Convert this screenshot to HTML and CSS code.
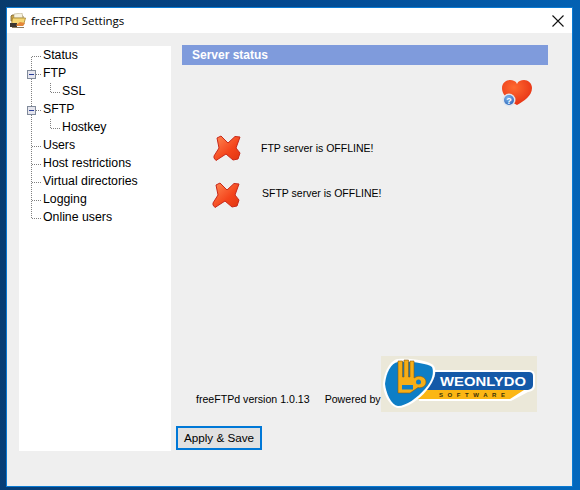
FILE: index.html
```html
<!DOCTYPE html>
<html lang="en">
<head>
<meta charset="utf-8">
<title>freeFTPd Settings</title>
<link rel="stylesheet" href="styles.css">
</head>
<body>
<div class="window">
  <header class="titlebar">
    <svg class="app-icon" width="16" height="15" viewBox="0 0 16 15">
      <path d="M1 3l1-1h4l1 1h6v5H1z" fill="#c9a24a" stroke="#7a6330" stroke-width=".8"/>
      <path d="M4 1l8-1 1 5H4z" fill="#f6f2e0" stroke="#a89a70" stroke-width=".5"/>
      <path d="M1.500 12l1-7h13l-2 7z" fill="#f5d774" stroke="#a5832f" stroke-width=".8"/>
      <rect x="0" y="10" width="7" height="4" fill="#3c3630"/>
      <path d="M6 12l4-3 5 1-2 3H7z" fill="#e4863a"/>
      <path d="M2 14h12v1H2z" fill="#8a7a60"/>
    </svg>
    <span class="title">freeFTPd Settings</span>
    <svg class="close" width="12" height="12" viewBox="0 0 12 12"><path d="M.5.5l11 11M11.500.5l-11 11" stroke="#111" stroke-width="1.100" fill="none"/></svg>
  </header>
  <div class="client">
    <nav class="tree">
      <svg class="tree-lines" width="60" height="200" viewBox="0 0 60 200">
        <g stroke="#808080" stroke-width="1" stroke-dasharray="1 1" fill="none" shape-rendering="crispEdges">
          <path d="M12.500 10.500V172.500"/>
          <path d="M12.500 10.500H23M17 28.500H23M17 64.500H23M12.500 100.500H23M12.500 118.500H23M12.500 136.500H23M12.500 154.500H23M12.500 172.500H23"/>
          <path d="M31.500 37V46.500H41M31.500 73V82.500H41"/>
        </g>
        <g shape-rendering="crispEdges">
          <rect x="8.500" y="24.500" width="8" height="8" fill="#e6e6ee" stroke="#808a9a"/>
          <path d="M10 28.500h5" stroke="#2a3f9a"/>
          <rect x="8.500" y="60.500" width="8" height="8" fill="#e6e6ee" stroke="#808a9a"/>
          <path d="M10 64.500h5" stroke="#2a3f9a"/>
        </g>
      </svg>
      <div class="node">Status</div>
      <div class="node">FTP</div>
      <div class="node child">SSL</div>
      <div class="node">SFTP</div>
      <div class="node child">Hostkey</div>
      <div class="node">Users</div>
      <div class="node">Host restrictions</div>
      <div class="node">Virtual directories</div>
      <div class="node">Logging</div>
      <div class="node">Online users</div>
    </nav>
    <main class="panel">
      <h1 class="panel-head">Server status</h1>
      <div class="heart-row">
        <svg class="heart" width="30" height="27" viewBox="0 0 30 27">
          <defs>
            <radialGradient id="hg" cx=".4" cy=".3" r=".8"><stop offset="0" stop-color="#ff6a30"/><stop offset="1" stop-color="#e32a10"/></radialGradient>
            <radialGradient id="qg" cx=".4" cy=".3" r=".8"><stop offset="0" stop-color="#7fb4ea"/><stop offset="1" stop-color="#2a63b8"/></radialGradient>
          </defs>
          <path d="M15 25C8 21 0 16 0 8 0 3 4 0 8 0c3 0 6 1 7 4 1-3 4-4 7-4 4 0 8 3 8 8 0 8-8 13-15 17z" fill="url(#hg)"/>
          <circle cx="7" cy="20" r="6.500" fill="#dfe6ef"/>
          <circle cx="7" cy="20" r="5" fill="url(#qg)"/>
          <text x="7" y="23.500" class="q">?</text>
        </svg>
      </div>
      <div class="status s1">
        <svg class="x" width="28" height="26" viewBox="0 0 28 26">
          <defs>
            <linearGradient id="xg" x1="0" y1="0" x2="1" y2="1"><stop offset="0" stop-color="#ff8a55"/><stop offset=".6" stop-color="#f4451c"/><stop offset="1" stop-color="#e03510"/></linearGradient>
          </defs>
          <path class="cross" d="M4 3L8 1L15 8L22 1.500L27 2L23 13L27 18L25 24L20 25L13 19L3 25.500L1 23V21L6 13Z"/>
        </svg>
        <span class="msg">FTP server is OFFLINE!</span>
      </div>
      <div class="status s2">
        <svg class="x" width="28" height="26" viewBox="0 0 28 26">
          <path class="cross" d="M4 3L8 1L15 8L22 1.500L27 2L23 13L27 18L25 24L20 25L13 19L3 25.500L1 23V21L6 13Z"/>
        </svg>
        <span class="msg">SFTP server is OFFLINE!</span>
      </div>
      <div class="credits">
        <span class="version">freeFTPd version 1.0.13</span>
        <span class="powered">Powered by</span>
        <svg class="logo" width="156" height="56" viewBox="0 0 156 56">
          <rect width="156" height="56" fill="#ebe8d9"/>
          <path d="M42 14H148Q154 14 154 20V30Q154 35 147 36L130 45H38Z" fill="#fff"/>
          <path d="M42 16H148Q152 16 152 20V29Q152 33 147 34H42Z" fill="#1459a8"/>
          <path d="M40 34H143L129 43H36Z" fill="#fbb614"/>
          <path d="M17 3C28 2 48 4 53 10 56 15 54 24 46 34 38 44 26 52 17 52 9 51 2 38 2 28 3 16 9 4 17 3Z" fill="#fff"/>
          <path d="M17 6C28 5 46 7 51 11 53 16 52 24 44 33 36 42 25 50 17 50 10 49 5 37 4 28 5 17 10 7 17 6Z" fill="#0e7ec6"/>
          <path d="M17 5h4.500v16h1.500V4h4.500v17h1.500V5h4v17l3-1.500c5-1 9 1.500 9 5.500s-4 6.500-8 5.500L29 37H17z" fill="#f6ae17" stroke="#8a5a12" stroke-width=".6"/>
          <rect x="21" y="29" width="11" height="4.500" fill="#0e7ec6"/>
          <circle cx="37.500" cy="26" r="2.500" fill="#0e7ec6"/>
          <text x="59" y="30" class="logo-main" textLength="86" lengthAdjust="spacingAndGlyphs">WEONLYDO</text>
          <text x="58" y="41" class="logo-sub" textLength="66">SOFTWARE</text>
        </svg>
      </div>
      <button class="apply" type="button">Apply &amp; Save</button>
    </main>
  </div>
</div>
</body>
</html>
```
FILE: styles.css
```css
* { box-sizing: border-box; }
html, body { height: 100%; }
body {
  margin: 0;
  padding: 7px 7px 3px 6px;
  overflow: hidden;
  background: linear-gradient(100deg, #083a6c 0%, #03478d 40%, #0368bd 100%);
  font-family: "Liberation Sans", Arial, sans-serif;
  font-size: 12px;
  color: #000;
}
.window {
  height: 480px;
  border: 1px solid #0a7ad2;
  background: #efefef;
  display: flex;
  flex-direction: column;
}
.titlebar {
  flex: none;
  height: 25px;
  background: #fff;
  display: flex;
  align-items: center;
  padding: 0 8px 0 3px;
}
.app-icon { flex: none; }
.title {
  margin-left: 5px;
  font-family: "Open Sans", sans-serif;
  font-size: 11.500px;
  flex: 1;
}
.close { flex: none; }
.client {
  flex: 1;
  display: flex;
  padding: 12px 0 0 12px;
  min-height: 0;
}
.tree {
  position: relative;
  flex: none;
  width: 152px;
  height: 405px;
  margin-top: 1px;
  background: #fff;
}
.tree-lines { position: absolute; left: 0; top: 0; }
.node {
  height: 18px;
  line-height: 18px;
  padding-left: 24px;
  font-size: 12.300px;
}
.node.child { padding-left: 43px; }
.panel {
  flex: none;
  width: 378px;
  margin-left: 5px;
  display: flex;
  flex-direction: column;
  height: 405px;
}
.panel-head {
  margin: 0 0 0 6px;
  width: 366px;
  flex: none;
  height: 20px;
  line-height: 20px;
  padding-left: 10px;
  background: #7f9bdc;
  color: #fff;
  font-size: 12px;
  font-weight: bold;
}
.heart-row {
  flex: none;
  display: flex;
  justify-content: flex-end;
  padding: 15px 22px 0 0;
  height: 44px;
}
.heart { overflow: visible; }
.q { font: bold 9px "Liberation Sans", sans-serif; fill: #fff; text-anchor: middle; }
.status { display: flex; align-items: center; flex: none; height: 26px; }
.status .x { flex: none; }
.cross { fill: url(#xg); stroke: #c8281a; stroke-width: 1; stroke-linejoin: round; }
.msg { font-size: 10.500px; white-space: nowrap; }
.s1 { margin: 26px 0 0 37px; gap: 20px; }
.s1 .msg { padding-bottom: 1px; }
.s2 { margin: 21px 0 0 36px; gap: 22px; }
.s2 .msg { padding-bottom: 4px; }
.credits {
  margin-top: auto;
  flex: none;
  display: flex;
  align-items: flex-end;
  padding: 0 17px 0 20px;
  height: 56px;
  font-size: 10.600px;
  white-space: nowrap;
}
.version { margin-bottom: 7px; }
.powered { margin: 0 0 7px 15px; }
.logo { flex: none; margin-left: auto; }
.logo-main { font: bold 12px "Liberation Sans", sans-serif; fill: #fff; }
.logo-sub { font: bold 6px "Liberation Sans", sans-serif; fill: #3a3208; }
.apply {
  flex: none;
  align-self: flex-start;
  margin-top: 14px;
  width: 86px;
  height: 24px;
  border: 2px solid #0078d7;
  background: #e1e1e1;
  font: 11.700px "Liberation Sans", sans-serif;
  color: #000;
  padding: 0 0 2px;
}
```
